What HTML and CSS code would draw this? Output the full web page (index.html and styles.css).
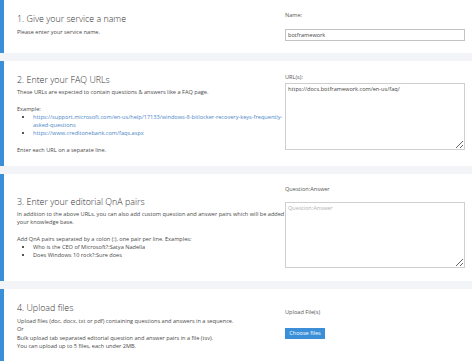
FILE: index.html
```html
<!DOCTYPE html>
<html lang="en">
<head>
<meta charset="utf-8">
<title>Create a knowledge base</title>
<link rel="stylesheet" href="styles.css">
</head>
<body>
<div class="page">
  <section class="step step-1">
    <div class="info">
      <h2 class="title">1. Give your service a name</h2>
      <p class="desc">Please enter your service name.</p>
    </div>
    <div class="field">
      <label class="label" for="name">Name:</label>
      <input class="input" id="name" type="text" value="botframework">
    </div>
  </section>

  <section class="step step-2">
    <div class="info">
      <h2 class="title">2. Enter your FAQ URLs</h2>
      <p class="desc">These URLs are expected to contain questions &amp; answers like a FAQ page.</p>
      <p class="desc gap">Example:</p>
      <ul class="list">
        <li><a class="link" href="#">https://support.microsoft.com/en-us/help/17133/windows-8-bitlocker-recovery-keys-frequently-asked-questions</a></li>
        <li><a class="link" href="#">https://www.creditonebank.com/faqs.aspx</a></li>
      </ul>
      <p class="desc gap">Enter each URL on a separate line.</p>
    </div>
    <div class="field">
      <label class="label" for="urls">URL(s):</label>
      <textarea class="area area-urls" id="urls">https://docs.botframework.com/en-us/faq/</textarea>
    </div>
  </section>

  <section class="step step-3">
    <div class="info">
      <h2 class="title">3. Enter your editorial QnA pairs</h2>
      <p class="desc wide">In addition to the above URLs, you can also add custom question and answer pairs which will be added to your knowledge base.</p>
      <p class="desc gap">Add QnA pairs separated by a colon (:), one pair per line. Examples:</p>
      <ul class="list">
        <li>Who is the CEO of Microsoft?:Satya Nadella</li>
        <li>Does Windows 10 rock?:Sure does</li>
      </ul>
    </div>
    <div class="field">
      <label class="label" for="qna">Question:Answer</label>
      <textarea class="area area-qna" id="qna" placeholder="Question:Answer"></textarea>
    </div>
  </section>

  <section class="step step-4">
    <div class="info">
      <h2 class="title">4. Upload files</h2>
      <p class="desc">Upload files (doc, docx, txt or pdf) containing questions and answers in a sequence.<br>Or<br>Bulk upload tab separated editorial question and answer pairs in a file (tsv).<br>You can upload up to 5 files, each under 2MB.</p>
    </div>
    <div class="field">
      <span class="label">Upload File(s)</span>
      <button class="choose" type="button">Choose files</button>
    </div>
  </section>
</div>
</body>
</html>
```

FILE: styles.css
```css
* {
  box-sizing: border-box;
}

html, body {
  margin: 0;
  padding: 0;
  background: #ffffff;
}

body {
  font-family: "Open Sans", "Noto Sans", sans-serif;
  color: #444444;
  width: 474px;
  height: 361px;
  overflow: hidden;
}

.page {
  width: 472px;
  display: flex;
  flex-direction: column;
  gap: 8px;
  background: #f3f4f7;
}

.step {
  background: #ffffff;
  border-left: 4px solid #3b8fd9;
  padding-left: 13px;
  display: grid;
  grid-template-columns: 268px 180px;
  align-items: start;
}

.step-1 { height: 53px; }
.step-2 { height: 105px; }
.step-3 { height: 107px; }
.step-4 { height: 80px; }

.info {
  padding-top: 12px;
}

.step-3 .info {
  padding-top: 21px;
}

.title {
  margin: 0;
  font-size: 8.9px;
  line-height: 13px;
  font-weight: 300;
  color: #333333;
  white-space: nowrap;
}

.desc {
  margin: 2px 0 0;
  font-size: 5.6px;
  line-height: 8.3px;
  color: #4a4a4a;
}

.desc.wide {
  width: 276px;
}

.step-1 .desc { margin-top: 3px; }
.step-4 .desc { margin-top: 3px; }

.desc.gap {
  margin-top: 8.3px;
}

.list {
  margin: 0;
  padding-left: 16px;
  font-size: 5.6px;
  line-height: 8.3px;
  color: #4a4a4a;
  list-style: square;
}

.list li::marker {
  color: #555555;
}

.link {
  color: #4a86c6;
  text-decoration: none;
}

.field {
  padding-top: 11px;
  display: flex;
  flex-direction: column;
  align-items: flex-start;
}

.step-2 .field { padding-top: 12px; }
.step-4 .field { padding-top: 19px; }

.label {
  font-size: 5.6px;
  line-height: 8.3px;
  color: #555555;
}

.input {
  margin-top: 9.5px;
  width: 180px;
  height: 12px;
  border: 1px solid #c3c3c3;
  padding: 0 2px;
  font-family: inherit;
  font-size: 5.6px;
  color: #444444;
  outline: none;
}

.area {
  width: 180px;
  border: 1px solid #cfcfcf;
  padding: 2px;
  font-family: inherit;
  font-size: 5.6px;
  line-height: 7px;
  color: #444444;
  resize: vertical;
  outline: none;
}

.area::placeholder {
  color: #b0b0b0;
}

.area-urls {
  margin-top: 2px;
  height: 67px;
}

.area-qna {
  margin-top: 9px;
  height: 66px;
}

.choose {
  margin-top: 11.5px;
  width: 40px;
  height: 11px;
  padding: 0;
  border: none;
  background: #3b8fd9;
  color: #ffffff;
  font-family: inherit;
  font-size: 5.6px;
  line-height: 11px;
}
```
